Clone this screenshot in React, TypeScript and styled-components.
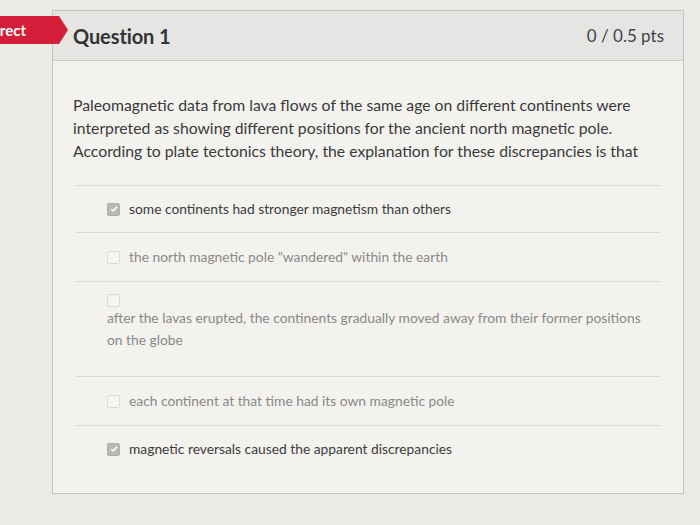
import React from "react";
import styled, { createGlobalStyle } from "styled-components";

const GlobalStyle = createGlobalStyle`
  html, body {
    margin: 0;
    padding: 0;
    background-color: #ecebe8;
    font-family: Lato, "Open Sans", "Liberation Sans", sans-serif;
    overflow: hidden;
  }
`;

const Page = styled.div`
  width: 700px;
  height: 525px;
  padding: 10px 0 0 52px;
  box-sizing: border-box;
`;

const Card = styled.div`
  position: relative;
  width: 632px;
  height: 484px;
  box-sizing: border-box;
  border: 1px solid #c4c3c0;
  background-color: #f3f2ef;
`;

const ResultBadge = styled.div`
  position: absolute;
  top: 5px;
  right: calc(100% - 15px);
  height: 28px;
  display: flex;
  align-items: center;
  padding: 0 42px 0 12px;
  background-color: #d51f3a;
  clip-path: polygon(0 0, calc(100% - 9px) 0, 100% 50%, calc(100% - 9px) 100%, 0 100%);
  color: #ffffff;
  font-size: 15px;
  font-weight: 700;
  white-space: nowrap;
`;

const Header = styled.div`
  height: 49px;
  display: flex;
  align-items: center;
  justify-content: space-between;
  padding: 0 19px 0 20px;
  background-color: #e6e5e3;
  border-bottom: 1px solid #c9c8c5;
`;

const Title = styled.div`
  font-size: 20px;
  font-weight: 700;
  color: #333333;
  letter-spacing: -0.1px;
`;

const Points = styled.div`
  font-size: 17px;
  color: #444444;
`;

const QuestionText = styled.div`
  padding: 32px 20px 23px 20px;
  font-size: 15.75px;
  line-height: 23px;
  color: #3a3a3a;
`;

const Answers = styled.div`
  margin: 0 22px;
`;

const Option = styled.div<{ $tall?: boolean }>`
  display: flex;
  flex-wrap: wrap;
  align-items: center;
  column-gap: 9px;
  border-top: 1px solid #dddcd9;
  padding: ${(p) => (p.$tall ? "12px 18px 25px 32px" : "13px 18px 13px 32px")};
  min-height: 20px;
`;

const Box = styled.span<{ $checked?: boolean }>`
  width: 13px;
  height: 13px;
  border-radius: 2px;
  box-sizing: border-box;
  display: inline-flex;
  align-items: center;
  justify-content: center;
  background-color: ${(p) => (p.$checked ? "#b9b8b6" : "#f6f5f3")};
  border: 1px solid ${(p) => (p.$checked ? "#b0afad" : "#dad9d6")};
`;

const Label = styled.span<{ $selected?: boolean }>`
  font-size: 13.8px;
  line-height: ${(p) => (p.$selected ? "20px" : "22px")};
  color: ${(p) => (p.$selected ? "#3c3c3c" : "#8a8987")};
`;

const Check = () => (
  <svg width="8" height="8" viewBox="0 0 8 8">
    <path d="M1.2 4.2 L3.2 6 L6.8 1.8" fill="none" stroke="#ffffff" strokeWidth="1.4" />
  </svg>
);

interface AnswerItem {
  text: string;
  checked: boolean;
}

const answers: AnswerItem[] = [
  { text: "some continents had stronger magnetism than others", checked: true },
  { text: 'the north magnetic pole "wandered" within the earth', checked: false },
  {
    text: "after the lavas erupted, the continents gradually moved away from their former positions on the globe",
    checked: false,
  },
  { text: "each continent at that time had its own magnetic pole", checked: false },
  { text: "magnetic reversals caused the apparent discrepancies", checked: true },
];

const App: React.FunctionComponent = () => {
  return (
    <>
      <GlobalStyle />
      <Page>
        <Card>
          <ResultBadge>Incorrect</ResultBadge>
          <Header>
            <Title>Question 1</Title>
            <Points>0 / 0.5 pts</Points>
          </Header>
          <QuestionText>
            Paleomagnetic data from lava flows of the same age on different continents were
            interpreted as showing different positions for the ancient north magnetic pole.
            According to plate tectonics theory, the explanation for these discrepancies is that
          </QuestionText>
          <Answers>
            {answers.map((answer, index) => (
              <Option key={index} $tall={answer.text.length > 80}>
                <Box $checked={answer.checked}>{answer.checked && <Check />}</Box>
                <Label $selected={answer.checked}>{answer.text}</Label>
              </Option>
            ))}
          </Answers>
        </Card>
      </Page>
    </>
  );
};

export default App;
